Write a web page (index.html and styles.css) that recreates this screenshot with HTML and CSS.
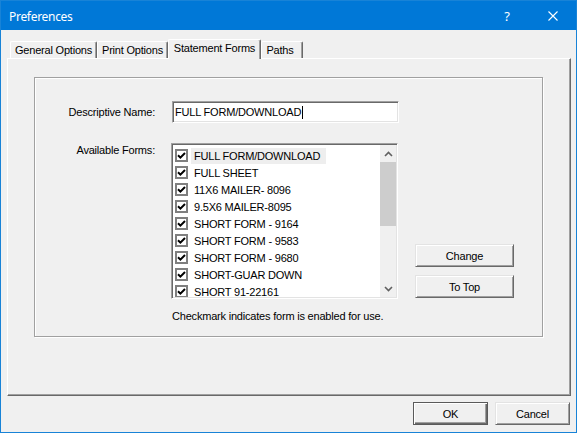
FILE: index.html
```html
<!DOCTYPE html>
<html>
<head>
<meta charset="utf-8">
<title>Preferences</title>
<link rel="stylesheet" href="styles.css">
</head>
<body>
<div class="window">
  <div class="titlebar">
    <span class="title">Preferences</span>
    <span class="cap-btn help">?</span>
    <span class="cap-btn close">
      <svg width="10" height="10" viewBox="0 0 10 10"><path d="M0.5 0.5 L9.5 9.5 M9.5 0.5 L0.5 9.5" stroke="#fff" stroke-width="1.1" fill="none"/></svg>
    </span>
  </div>
  <div class="content">
    <div class="tabs">
      <div class="tab tab-general">General Options</div>
      <div class="tab tab-print">Print Options</div>
      <div class="tab tab-statement active">Statement Forms</div>
      <div class="tab tab-paths">Paths</div>
    </div>
    <div class="panel">
      <div class="group">
        <div class="label label-name">Descriptive Name:</div>
        <div class="textbox">FULL FORM/DOWNLOAD<span class="caret"></span></div>
        <div></div>

        <div class="label label-forms">Available Forms:</div>
        <div class="list">
          <div class="items">
            <div class="item"><span class="cb"><svg width="9" height="9" viewBox="0 0 9 9"><path d="M1 4.2 L3.4 6.6 L8 2" stroke="#000" stroke-width="2" fill="none"/></svg></span><span class="text selected">FULL FORM/DOWNLOAD</span></div>
            <div class="item"><span class="cb"><svg width="9" height="9" viewBox="0 0 9 9"><path d="M1 4.2 L3.4 6.6 L8 2" stroke="#000" stroke-width="2" fill="none"/></svg></span><span class="text">FULL SHEET</span></div>
            <div class="item"><span class="cb"><svg width="9" height="9" viewBox="0 0 9 9"><path d="M1 4.2 L3.4 6.6 L8 2" stroke="#000" stroke-width="2" fill="none"/></svg></span><span class="text">11X6 MAILER- 8096</span></div>
            <div class="item"><span class="cb"><svg width="9" height="9" viewBox="0 0 9 9"><path d="M1 4.2 L3.4 6.6 L8 2" stroke="#000" stroke-width="2" fill="none"/></svg></span><span class="text">9.5X6 MAILER-8095</span></div>
            <div class="item"><span class="cb"><svg width="9" height="9" viewBox="0 0 9 9"><path d="M1 4.2 L3.4 6.6 L8 2" stroke="#000" stroke-width="2" fill="none"/></svg></span><span class="text">SHORT FORM - 9164</span></div>
            <div class="item"><span class="cb"><svg width="9" height="9" viewBox="0 0 9 9"><path d="M1 4.2 L3.4 6.6 L8 2" stroke="#000" stroke-width="2" fill="none"/></svg></span><span class="text">SHORT FORM - 9583</span></div>
            <div class="item"><span class="cb"><svg width="9" height="9" viewBox="0 0 9 9"><path d="M1 4.2 L3.4 6.6 L8 2" stroke="#000" stroke-width="2" fill="none"/></svg></span><span class="text">SHORT FORM - 9680</span></div>
            <div class="item"><span class="cb"><svg width="9" height="9" viewBox="0 0 9 9"><path d="M1 4.2 L3.4 6.6 L8 2" stroke="#000" stroke-width="2" fill="none"/></svg></span><span class="text">SHORT-GUAR DOWN</span></div>
            <div class="item"><span class="cb"><svg width="9" height="9" viewBox="0 0 9 9"><path d="M1 4.2 L3.4 6.6 L8 2" stroke="#000" stroke-width="2" fill="none"/></svg></span><span class="text">SHORT 91-22161</span></div>
          </div>
          <div class="scrollbar">
            <div class="sb-btn"><svg width="9" height="6" viewBox="0 0 9 6"><path d="M1 5 L4.5 1.5 L8 5" stroke="#606060" stroke-width="1.6" fill="none"/></svg></div>
            <div class="sb-track"><div class="sb-thumb"></div></div>
            <div class="sb-btn"><svg width="9" height="6" viewBox="0 0 9 6"><path d="M1 1 L4.5 4.5 L8 1" stroke="#606060" stroke-width="1.6" fill="none"/></svg></div>
          </div>
        </div>
        <div class="side-buttons">
          <div class="btn">Change</div>
          <div class="btn">To Top</div>
        </div>

        <div class="hint">Checkmark indicates form is enabled for use.</div>
      </div>
    </div>
    <div class="actions">
      <div class="btn btn-dialog default">OK</div>
      <div class="btn btn-dialog">Cancel</div>
    </div>
  </div>
</div>
</body>
</html>
```

FILE: styles.css
```css
* { box-sizing: border-box; }

body {
  margin: 0;
  font-family: "Liberation Sans", Arial, sans-serif;
  font-size: 11px;
  letter-spacing: -0.2px;
  color: #000;
  background: #f0f0f0;
}

.window {
  width: 577px;
  height: 433px;
  border: 1px solid #1883d7;
  background: #f0f0f0;
  display: flex;
  flex-direction: column;
}

.titlebar {
  height: 29px;
  background: #0078d7;
  color: #fff;
  display: flex;
  align-items: center;
  flex-shrink: 0;
}

.title {
  flex: 1;
  padding-left: 8px;
  padding-top: 1px;
  font-family: "Noto Sans", "Open Sans", sans-serif;
  font-size: 12px;
  letter-spacing: -0.3px;
}

.cap-btn {
  width: 46px;
  height: 29px;
  display: flex;
  align-items: center;
  justify-content: center;
}

.help {
  font-family: "Noto Sans", "Open Sans", sans-serif;
  font-size: 13px;
  letter-spacing: 0;
}

.content {
  flex: 1;
  padding: 0 5px 0 6px;
  display: flex;
  flex-direction: column;
}

.tabs {
  height: 19px;
  margin-top: 9px;
  padding-left: 3px;
  display: flex;
  align-items: flex-end;
}

.tab {
  height: 17px;
  border-top: 1px solid #fff;
  border-left: 1px solid #fff;
  border-right: 1px solid #696969;
  box-shadow: inset -1px 0 #a0a0a0;
  border-radius: 2px 2px 0 0;
  text-align: center;
  line-height: 16px;
  white-space: nowrap;
}

.tab-general { width: 87px; }
.tab-print { width: 71px; }
.tab-statement { width: 93px; }
.tab-paths { width: 42px; padding-right: 4px; }

.tab.active {
  height: 20px;
  margin-bottom: -1px;
  line-height: 16px;
  position: relative;
  z-index: 1;
  background: #f0f0f0;
}

.panel {
  width: 564px;
  height: 338px;
  border-top: 1px solid #fff;
  border-left: 1px solid #fff;
  border-right: 1px solid #696969;
  border-bottom: 1px solid #696969;
  box-shadow: inset -1px -1px #a0a0a0;
  padding: 18px 0 0 26px;
}

.group {
  width: 509px;
  height: 260px;
  border: 1px solid #a0a0a0;
  box-shadow: inset 1px 1px #fff, 1px 1px #fff;
  padding-top: 23px;
  display: grid;
  grid-template-columns: 120px 228px 99px;
  column-gap: 16px;
  align-content: start;
}

.group > :nth-child(2) { margin-left: 1px; }

.label {
  text-align: right;
  white-space: nowrap;
}

.label-name {
  align-self: center;
}

.label-forms {
  align-self: start;
  margin-top: 20px;
  padding-top: 1px;
}

.textbox {
  height: 22px;
  width: 227px;
  background: #fff;
  border: 1px solid;
  border-color: #a0a0a0 #fff #fff #a0a0a0;
  box-shadow: inset 1px 1px #696969, inset -1px -1px #e3e3e3;
  padding-left: 2px;
  display: flex;
  align-items: center;
  white-space: nowrap;
}

.caret {
  display: inline-block;
  width: 1px;
  height: 13px;
  background: #000;
  margin-left: 1px;
}

.list {
  margin-top: 20px;
  height: 156px;
  width: 227px;
  background: #fff;
  border: 1px solid;
  border-color: #a0a0a0 #fff #fff #a0a0a0;
  box-shadow: inset 1px 1px #696969, inset -1px -1px #e3e3e3;
  padding: 1px;
  display: flex;
  overflow: hidden;
}

.items {
  flex: 1;
  padding: 2px 0 0 2px;
  overflow: hidden;
}

.item {
  height: 17px;
  display: flex;
  align-items: center;
  white-space: nowrap;
}

.cb {
  width: 13px;
  height: 13px;
  border: 2px solid #7f7f7f;
  background: #fff;
  display: flex;
  align-items: center;
  justify-content: center;
  margin-right: 3px;
  flex-shrink: 0;
}

.text {
  padding: 0 6px 0 3px;
  line-height: 16px;
}

.text.selected {
  background: #eeeeee;
}

.scrollbar {
  width: 16px;
  background: #f0f0f0;
  display: flex;
  flex-direction: column;
}

.sb-btn {
  height: 17px;
  display: flex;
  align-items: center;
  justify-content: center;
  flex-shrink: 0;
}

.sb-track {
  flex: 1;
}

.sb-thumb {
  height: 64px;
  background: #cdcdcd;
}

.side-buttons {
  align-self: end;
  display: flex;
  flex-direction: column;
  gap: 8px;
  margin-bottom: 1px;
}

.btn {
  height: 23px;
  background: #f0f0f0;
  border: 1px solid;
  border-color: #e3e3e3 #696969 #696969 #e3e3e3;
  box-shadow: inset 1px 1px #fff, inset -1px -1px #a0a0a0;
  display: flex;
  align-items: center;
  justify-content: center;
  white-space: nowrap;
}

.hint {
  grid-column: 2 / span 2;
  margin-top: 11px;
  line-height: 13px;
  margin-left: 1px;
  white-space: nowrap;
}

.actions {
  margin-top: 6px;
  padding-right: 1px;
  display: flex;
  justify-content: flex-end;
  gap: 7px;
}

.btn-dialog {
  width: 75px;
}

.btn.default {
  border-color: #5a5a5a;
  box-shadow: inset 1px 1px #fff, inset -1px -1px #696969, inset -2px -2px #a0a0a0;
}
```
